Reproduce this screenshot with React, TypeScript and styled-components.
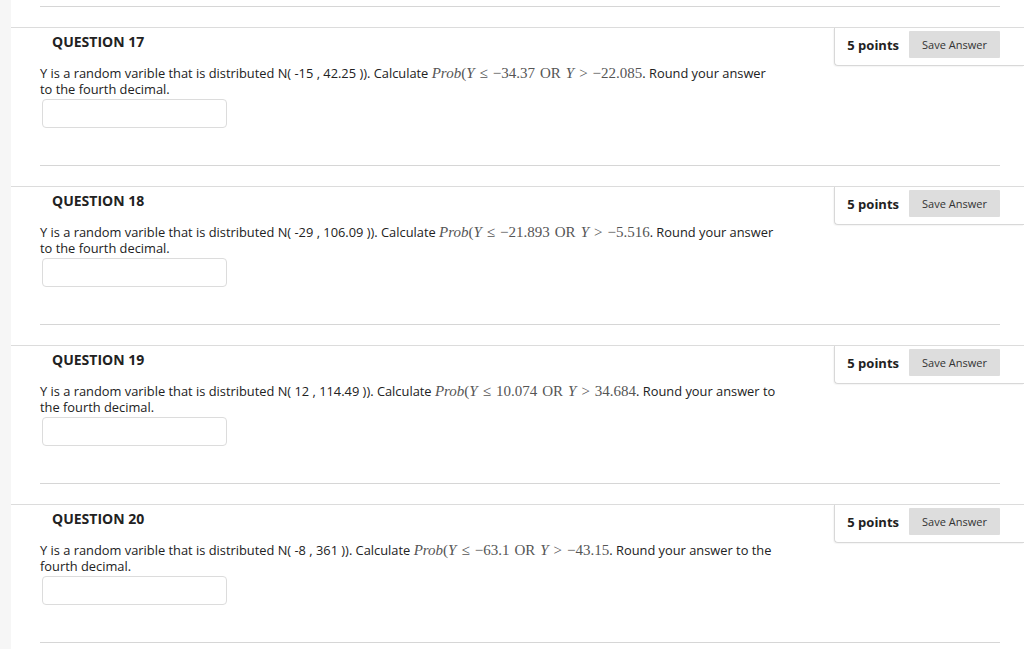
import React from "react";
import styled, { createGlobalStyle } from "styled-components";

const GlobalStyle = createGlobalStyle`
  body {
    margin: 0;
    background: #ffffff;
    font-family: "Open Sans", "Liberation Sans", sans-serif;
    color: #222;
  }
`;

const Page = styled.div`
  display: flex;
  min-height: 649px;
  overflow: hidden;
`;

const SideStrip = styled.div`
  width: 11px;
  flex-shrink: 0;
  background: #f6f6f6;
`;

const Main = styled.div`
  flex: 1;
  padding-top: 6px;
`;

const Divider = styled.hr`
  border: 0;
  border-top: 1px solid #d6d6d6;
  margin: 0 24px 0 29px;
`;

const QuestionList = styled.ul`
  list-style: none;
  margin: 0;
  padding: 0;
`;

const QuestionItem = styled.li`
  margin-top: 20px;
  border-top: 1px solid #dcdcdc;
`;

const HeaderRow = styled.div`
  display: flex;
  justify-content: space-between;
  align-items: flex-start;
  height: 37px;
`;

const Title = styled.h3`
  margin: 0;
  padding: 4px 0 0 41px;
  font-size: 14px;
  line-height: 20px;
  font-weight: 700;
  color: #222;
`;

const PointsBox = styled.div`
  display: flex;
  align-items: center;
  gap: 10px;
  padding: 3px 24px 7px 12px;
  border-left: 1px solid #d8d8d8;
  border-bottom: 1px solid #d8d8d8;
  border-bottom-left-radius: 4px;
  box-shadow: -1px 1px 1px rgba(0, 0, 0, 0.04);
  background: #fff;
  position: relative;
  z-index: 1;
`;

const Points = styled.span`
  font-size: 13px;
  font-weight: 700;
  color: #222;
`;

const SaveButton = styled.button`
  width: 91px;
  height: 27px;
  border: 0;
  border-radius: 1px;
  background: #dddddd;
  font-family: "Open Sans", "Liberation Sans", sans-serif;
  font-size: 11px;
  color: #333;
  padding: 0;
`;

const Body = styled.div`
  padding-left: 29px;
`;

const Prompt = styled.p`
  margin: 0;
  max-width: 738px;
  font-size: 12.85px;
  line-height: 16px;
  color: #222;
`;

const Math = styled.span`
  font-family: "Liberation Serif", "DejaVu Serif", serif;
  font-size: 15px;
  line-height: 1;
  color: #555;
`;

const MathVar = styled.i`
  font-style: italic;
`;

const Rel = styled.span`
  margin: 0 5px;
`;

const AnswerInput = styled.input`
  display: block;
  box-sizing: border-box;
  width: 185px;
  height: 29px;
  margin: 2px 0 37px 2px;
  border: 1px solid #dcdcdc;
  border-radius: 4px;
  background: #fff;
`;

type Question = {
  num: number;
  mean: string;
  variance: string;
  low: string;
  high: string;
};

const questions: Question[] = [
  { num: 17, mean: "-15", variance: "42.25", low: "−34.37", high: "−22.085" },
  { num: 18, mean: "-29", variance: "106.09", low: "−21.893", high: "−5.516" },
  { num: 19, mean: "12", variance: "114.49", low: "10.074", high: "34.684" },
  { num: 20, mean: "-8", variance: "361", low: "−63.1", high: "−43.15" },
];

const QuestionBlock = ({ q }: { q: Question }) => (
  <QuestionItem>
    <HeaderRow>
      <Title>QUESTION {q.num}</Title>
      <PointsBox>
        <Points>5 points</Points>
        <SaveButton>Save Answer</SaveButton>
      </PointsBox>
    </HeaderRow>
    <Body>
      <Prompt>
        Y is a random varible that is distributed N( {q.mean} , {q.variance} )). Calculate{" "}
        <Math>
          <MathVar>Prob</MathVar>(<MathVar>Y</MathVar>
          <Rel>≤</Rel>
          {q.low}
          <Rel>OR</Rel>
          <MathVar>Y</MathVar>
          <Rel>&gt;</Rel>
          {q.high}
        </Math>
        . Round your answer to the fourth decimal.
      </Prompt>
      <AnswerInput type="text" />
    </Body>
    <Divider />
  </QuestionItem>
);

const App = () => (
  <>
    <GlobalStyle />
    <Page>
      <SideStrip />
      <Main>
        <Divider />
        <QuestionList>
          {questions.map((q) => (
            <QuestionBlock key={q.num} q={q} />
          ))}
        </QuestionList>
      </Main>
    </Page>
  </>
);

export default App;
